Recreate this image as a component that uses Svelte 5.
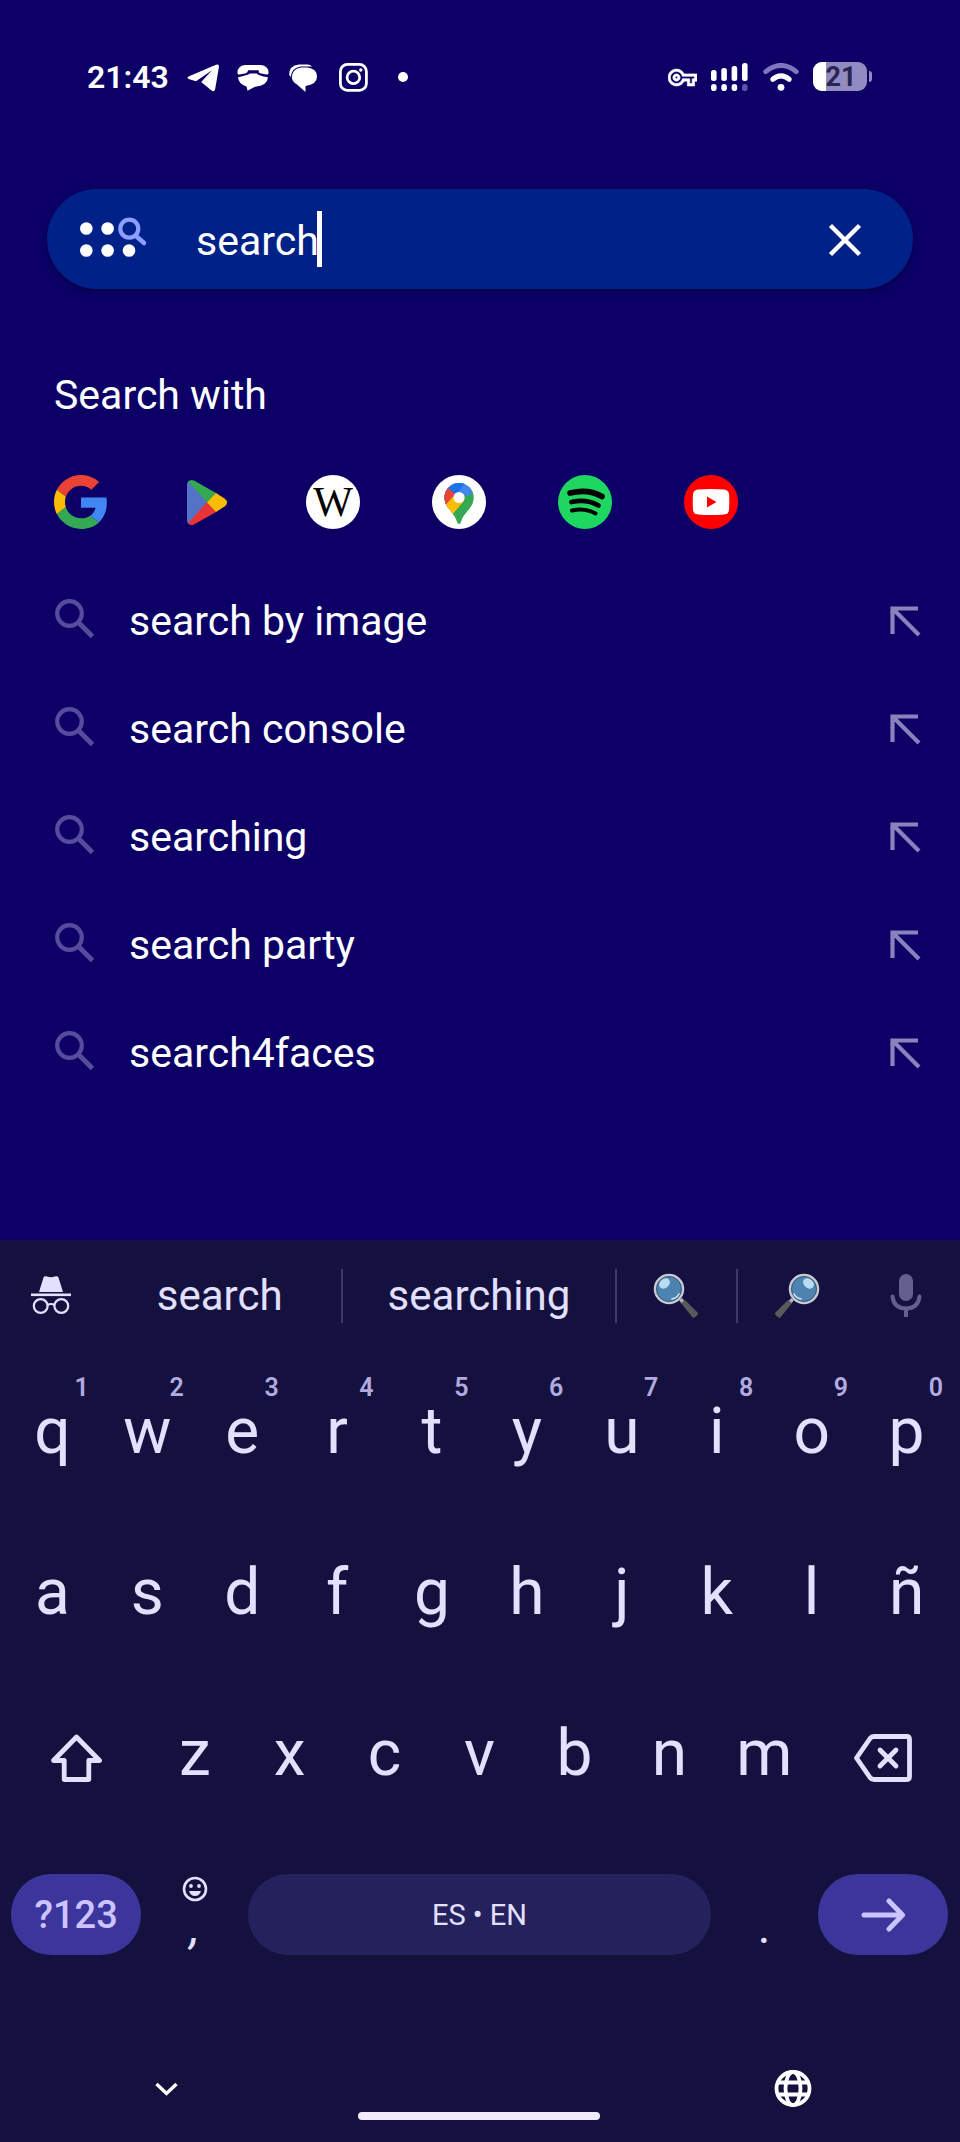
<script>
  let query = $state("search");

  const suggestions = [
    "search by image",
    "search console",
    "searching",
    "search party",
    "search4faces",
  ];

  const topRow = ["q", "w", "e", "r", "t", "y", "u", "i", "o", "p"];
  const middleRow = ["a", "s", "d", "f", "g", "h", "j", "k", "l", "ñ"];
  const bottomRow = ["z", "x", "c", "v", "b", "n", "m"];

  const type = (key) => {
    query += key;
  };

  const backspace = () => {
    query = query.slice(0, -1);
  };
</script>

{#snippet lens()}
  <circle cx="16" cy="16" r="14" fill="#4c83b0" stroke="#c9c9d4" stroke-width="2.5" />
  <circle cx="16" cy="16" r="12.5" fill="none" stroke="#3f5a74" stroke-width="1" />
  <ellipse cx="11.5" cy="10.5" rx="6" ry="4.5" fill="#b9dcf2" transform="rotate(-40 11.5 10.5)" />
  <path d="M19 26Q24 25 26 21" fill="none" stroke="#d5efff" stroke-width="1.6" stroke-linecap="round" />
  <path d="M26 27l3-2 3 4-3 2z" fill="#b5b5b8" />
  <path d="M28 30l4-3 13 13q0 3-5 5z" fill="#59595a" />
{/snippet}

<div class="phone">
  <header class="status">
    <div class="notifications">
      <span class="clock">21:43</span>
      <svg width="32" height="32" viewBox="0 0 32 32" fill="#fff">
        <path d="M1.5 15.5Q-.5 16.8 1.5 18L9 20.3 25 9.3 14.2 21 24.5 29.5Q27.5 31.5 28.2 28L32 5.5Q32 2.5 29 3.8Z" />
      </svg>
      <svg width="32" height="32" viewBox="0 0 32 32" fill="#fff">
        <path d="M.5 12.5Q0 5 8 4H24Q32 5 31.5 12.5Q31 13.8 29.5 13.4L23 12.3Q21.5 11.8 21.7 9.2H11Q10.8 12 9 12.3L2.5 13.6Q1 13.8.5 12.5Z" />
        <path d="M1 16.2Q5 15.8 10.5 13.8 12 13.4 12.8 12.4H20Q20.6 13.5 22 14.1 26 15.8 31 16.2 30.5 24.5 18 25.8L10.5 29.8 9.5 25.5Q1.5 23 1 16.2Z" />
      </svg>
      <svg width="32" height="32" viewBox="0 0 32 32" fill="#fff">
        <path d="M2.2 14Q2 4.5 12 3.5H21Q24 4 25 5.5H13.5Q4.5 7 3.8 16Z" />
        <path d="M14 6.5H20Q30 7.5 30 15.5 30 23.5 18.5 25V31L10 23.5Q5 21 4.8 16 5.5 7.5 14 6.5Z" />
      </svg>
      <svg width="32" height="32" viewBox="0 0 32 32" fill="none" stroke="#fff" stroke-width="2.8">
        <rect x="3.4" y="3.4" width="26" height="26" rx="7" />
        <circle cx="16.4" cy="16.4" r="6.3" />
        <circle cx="23.8" cy="9" r="1.7" fill="#fff" stroke="none" />
      </svg>
      <svg width="32" height="32" viewBox="0 0 32 32"><circle cx="16" cy="16" r="5" fill="#fff" /></svg>
    </div>
    <div class="system">
      <svg width="29" height="29" viewBox="0 0 24 24" fill="#fff" stroke="#fff" stroke-width=".5">
        <path d="M22 19h-6v-4h-2.68c-1.14 2.42-3.6 4-6.32 4-3.86 0-7-3.14-7-7s3.14-7 7-7c2.72 0 5.17 1.58 6.32 4H24v6h-2v4zm-4-2h2v-4h2v-2H11.94l-.23-.67C11.01 8.34 9.11 7 7 7c-2.76 0-5 2.24-5 5s2.24 5 5 5c2.11 0 4.01-1.34 4.71-3.33l.23-.67H18v4zM7 15c-1.65 0-3-1.35-3-3s1.35-3 3-3 3 1.35 3 3-1.35 3-3 3zm0-4c-.55 0-1 .45-1 1s.45 1 1 1 1-.45 1-1-.45-1-1-1z" />
      </svg>
      <svg width="38" height="28" viewBox="0 0 38 28" fill="#fff">
        <rect x="0" y="7" width="5.6" height="11" rx="2.5" />
        <rect x="10.3" y="5" width="5.6" height="13" rx="2.5" />
        <rect x="20.6" y="3" width="5.6" height="15" rx="2.5" />
        <rect x="31" y="0" width="5.6" height="18" rx="2.5" />
        <rect x="0" y="21" width="5.6" height="7" rx="2.8" />
        <rect x="10.3" y="21" width="5.6" height="7" rx="2.8" />
        <rect x="20.6" y="21" width="5.6" height="7" rx="2.8" />
        <rect x="31" y="21" width="5.6" height="7" rx="2.8" fill="#5d52ad" />
      </svg>
      <svg width="36" height="28" viewBox="0 0 36 28" fill="none" stroke-width="5" stroke-linecap="round">
        <path d="M2.8 8.6Q18-3.6 33.2 8.6" stroke="#7f76c0" />
        <path d="M9.8 16.3Q18 9.6 26.2 16.3" stroke="#fff" />
        <circle cx="18" cy="24.3" r="3.4" fill="#fff" />
      </svg>
      <svg width="60" height="30" viewBox="0 0 60 30">
        <clipPath id="cell"><rect width="54" height="29" rx="9" /></clipPath>
        <rect width="54" height="29" rx="9" fill="#928bc2" />
        <rect width="13" height="29" fill="#fff" clip-path="url(#cell)" />
        <path d="M56 9q3 0 3 3v5q0 3-3 3z" fill="#928bc2" />
        <text x="28" y="24" text-anchor="middle" class="percent">21</text>
      </svg>
    </div>
  </header>

  <main>
    <form class="searchbar" onsubmit={(e) => e.preventDefault()}>
      <svg width="68" height="48" viewBox="0 0 68 48" fill="#fff">
        <circle cx="6.3" cy="13.5" r="6.3" />
        <circle cx="27.6" cy="13.5" r="6.3" />
        <circle cx="6.3" cy="35.5" r="6.3" />
        <circle cx="27.6" cy="35.5" r="6.3" />
        <circle cx="49" cy="35.5" r="6.3" />
        <path d="M56 21L64 28" stroke="#8c9eff" stroke-width="4.5" stroke-linecap="round" />
        <circle cx="49.3" cy="13.7" r="9" fill="#002288" stroke="#8c9eff" stroke-width="4.2" />
      </svg>
      <label class="field">
        <input type="text" aria-label="Search" bind:value={query} />
        <span class="caret"></span>
      </label>
      <button type="button" aria-label="Clear" onclick={() => (query = "")}>
        <svg width="48" height="48" viewBox="0 0 48 48" stroke="#fff" stroke-width="4.4">
          <path d="M9.5 10.5L38.5 39.5M38.5 10.5L9.5 39.5" />
        </svg>
      </button>
    </form>

    <h2>Search with</h2>

    <nav class="providers">
      <a href="#google" aria-label="Google">
        <svg width="54" height="54" viewBox="0 0 48 48">
          <path fill="#ea4335" d="M24 9.5c3.54 0 6.71 1.22 9.21 3.6l6.85-6.85C35.9 2.38 30.47 0 24 0 14.62 0 6.51 5.38 2.56 13.22l7.98 6.19C12.43 13.72 17.74 9.5 24 9.5z" />
          <path fill="#4285f4" d="M46.98 24.55c0-1.57-.15-3.09-.38-4.55H24v9.02h12.94c-.58 2.96-2.26 5.48-4.78 7.18l7.73 6c4.51-4.18 7.09-10.36 7.09-17.65z" />
          <path fill="#fbbc05" d="M10.53 28.59c-.48-1.45-.76-2.99-.76-4.59s.27-3.14.76-4.59l-7.98-6.19C.92 16.46 0 20.12 0 24c0 3.88.92 7.54 2.56 10.78l7.97-6.19z" />
          <path fill="#34a853" d="M24 48c6.48 0 11.93-2.13 15.89-5.81l-7.73-6c-2.15 1.45-4.92 2.3-8.16 2.3-6.26 0-11.57-4.22-13.47-9.91l-7.98 6.19C6.51 42.62 14.62 48 24 48z" />
        </svg>
      </a>
      <a href="#play" aria-label="Play Store">
        <svg width="54" height="54" viewBox="0 0 54 54">
          <path fill="#5472c8" d="M9 6L28 27.5 9 49Q7 48 7 46V9Q7 7 9 6Z" />
          <path fill="#34a853" d="M8 6.5Q10.5 4 14 5.6L36.5 18.2 27.5 28Z" />
          <path fill="#ea3335" d="M8 48.5Q10.5 51 14 49.4L36.5 36.8 27 27Z" />
          <path fill="#fbbc04" d="M36 18L44.5 23.5Q49.5 27.5 44.5 31.5L36 37 27 27.5Z" />
        </svg>
      </a>
      <a href="#wikipedia" aria-label="Wikipedia">
        <svg width="54" height="54" viewBox="0 0 54 54">
          <circle cx="27" cy="27" r="27" fill="#fff" />
          <text x="27" y="41" text-anchor="middle" class="wiki">W</text>
        </svg>
      </a>
      <a href="#maps" aria-label="Maps">
        <svg width="54" height="54" viewBox="0 0 54 54">
          <clipPath id="pin">
            <path d="M27 49Q25.5 49 25 46.5C22.5 37 12.5 33.5 12.5 22.5A14.5 14.5 0 0 1 41.5 22.5C41.5 33.5 31.5 37 29 46.5Q28.5 49 27 49Z" />
          </clipPath>
          <circle cx="27" cy="27" r="27" fill="#fff" />
          <g clip-path="url(#pin)">
            <rect width="54" height="54" fill="#34a853" />
            <path d="M0 42L27 22.5 38 9V0H0Z" fill="#4285f4" />
            <path d="M0 0H34L33 8 27 16 14 30 8 12Z" fill="#1a73e8" />
            <path d="M8 10L16 13 27 22.5 14 34Z" fill="#ea4335" />
            <path d="M10 34L21 21.5 32 26 17.5 43Z" fill="#fbbc04" />
            <path d="M38 9L32 18 32 27 17 44 45 50V12Z" fill="#34a853" />
            <path d="M38 9L30 19 36 21 44 14Z" fill="#4285f4" />
          </g>
          <circle cx="27" cy="22.5" r="5.6" fill="#fff" />
        </svg>
      </a>
      <a href="#spotify" aria-label="Spotify">
        <svg width="54" height="54" viewBox="0 0 54 54" fill="none" stroke="#000" stroke-linecap="round">
          <circle cx="27" cy="27" r="27" fill="#1ed760" stroke="none" />
          <path d="M12 18Q30 13.5 44 21.5" stroke-width="5.6" />
          <path d="M13.5 27Q28.5 23.5 40.5 30.5" stroke-width="4.8" />
          <path d="M14 35.5Q27 32.5 37.5 38.5" stroke-width="4" />
        </svg>
      </a>
      <a href="#youtube" aria-label="YouTube">
        <svg width="54" height="54" viewBox="0 0 54 54">
          <circle cx="27" cy="27" r="27" fill="#f00" />
          <path d="M14 14.5Q27 13.5 40 14.5 44.5 15 45 19 45.5 27 45 35 44.5 39 40 39.5 27 40.5 14 39.5 9.5 39 9 35 8.5 27 9 19 9.5 15 14 14.5Z" fill="#fff" />
          <path d="M23 21.5L32.5 27 23 32.5Z" fill="#f00" />
        </svg>
      </a>
    </nav>

    <ul>
      {#each suggestions as suggestion}
        <li>
          <a class="suggestion" href="#results">
            <svg width="40" height="44" viewBox="0 0 40 44" fill="none" stroke="#554c9e" stroke-width="4.2">
              <circle cx="14.5" cy="14.5" r="12.3" />
              <path d="M23.5 23.5L37.5 37.5" stroke-width="5" />
            </svg>
            {suggestion}
          </a>
          <button aria-label="Use {suggestion}" onclick={() => (query = suggestion)}>
            <svg width="48" height="48" viewBox="0 0 48 48" fill="none" stroke="#8983bd" stroke-width="4.2">
              <path d="M37 11.5H11.5V37M12 12L38 38" />
            </svg>
          </button>
        </li>
      {/each}
    </ul>
  </main>

  <section class="keyboard">
    <div class="strip">
      <button aria-label="Incognito">
        <svg width="40" height="40" viewBox="0 0 40 40" fill="#e3e0ff">
          <path d="M8 16L12.5 1.5Q13.5-.5 16 .5 20 2 24 .5 26.5-.5 27.5 1.5L32 16Z" />
          <rect y="17.5" width="40" height="2.6" />
          <g fill="none" stroke="#e3e0ff" stroke-width="2.2">
            <circle cx="9.7" cy="30" r="6.9" />
            <circle cx="30.3" cy="30" r="6.9" />
            <path d="M16.5 29Q20 27 23.5 29" />
          </g>
        </svg>
      </button>
      <button>search</button>
      <button class="divided">searching</button>
      <button class="divided" aria-label="Magnifying glass tilted left">
        <svg width="46" height="46" viewBox="0 0 46 46">{@render lens()}</svg>
      </button>
      <button class="divided" aria-label="Magnifying glass tilted right">
        <svg width="46" height="46" viewBox="0 0 46 46">
          <g transform="matrix(-1 0 0 1 46 0)">{@render lens()}</g>
        </svg>
      </button>
      <button aria-label="Voice input">
        <svg width="32" height="44" viewBox="0 0 32 44" fill="none" stroke="#655f8e" stroke-width="4">
          <rect x="9" y="0" width="14" height="27" rx="7" fill="#655f8e" stroke="none" />
          <path d="M2.5 22.5Q4 34.5 16 34.5T29.5 22.5" stroke-linecap="round" />
          <path d="M16 35V43" />
        </svg>
      </button>
    </div>

    <div class="row ten">
      {#each topRow as key, i}
        <button class="key" onclick={() => type(key)}>
          {key}<span class="hint">{(i + 1) % 10}</span>
        </button>
      {/each}
    </div>

    <div class="row ten">
      {#each middleRow as key}
        <button class="key" onclick={() => type(key)}>{key}</button>
      {/each}
    </div>

    <div class="row nine">
      <button class="key icon" aria-label="Shift">
        <svg width="51" height="48" viewBox="0 0 51 48" fill="none" stroke="#e3e0ff" stroke-width="4.8" stroke-linejoin="round">
          <path d="M25.5 3L48.5 26.5H37.8V45.5H13.2V26.5H2.5Z" />
        </svg>
      </button>
      {#each bottomRow as key}
        <button class="key" onclick={() => type(key)}>{key}</button>
      {/each}
      <button class="key icon" aria-label="Backspace" onclick={backspace}>
        <svg width="58" height="48" viewBox="0 0 58 48" fill="none" stroke="#e3e0ff" stroke-width="4.8" stroke-linejoin="round" stroke-linecap="round">
          <path d="M2.5 24L16 4.5Q17.5 2.5 20 2.5H52.5Q55.5 2.5 55.5 5.5V42.5Q55.5 45.5 52.5 45.5H20Q17.5 45.5 16 43.5Z" />
          <path d="M26 16L42 32M42 16L26 32" />
        </svg>
      </button>
    </div>

    <div class="row last">
      <button class="pill accent">?123</button>
      <button class="key mark" onclick={() => type(",")}>
        <svg width="26" height="26" viewBox="0 0 26 26" fill="#e3e0ff">
          <circle cx="13" cy="13" r="11" fill="none" stroke="#e3e0ff" stroke-width="2.6" />
          <circle cx="9" cy="10" r="1.9" />
          <circle cx="17" cy="10" r="1.9" />
          <path d="M7 15H19Q17.5 20 13 20T7 15Z" />
        </svg>
        <span class="comma">,</span>
      </button>
      <button class="pill space" onclick={() => type(" ")}>ES • EN</button>
      <button class="key mark dot" onclick={() => type(".")}><span>.</span></button>
      <button class="pill accent" aria-label="Go">
        <svg width="44" height="34" viewBox="0 0 44 34" fill="none" stroke="#cbc4ff" stroke-width="5" stroke-linecap="round" stroke-linejoin="round">
          <path d="M3 17H40M28 3L41.500 17 28 31" />
        </svg>
      </button>
    </div>

    <footer>
      <button aria-label="Hide keyboard">
        <svg width="36" height="36" viewBox="0 0 36 36" fill="none" stroke="#fff" stroke-width="3.4">
          <path d="M7.5 13L17.5 22.5 27.5 13" />
        </svg>
      </button>
      <div class="home"></div>
      <button aria-label="Change language">
        <svg width="40" height="40" viewBox="0 0 40 40" fill="none" stroke="#fff" stroke-width="3.8">
          <circle cx="20" cy="19.5" r="16.5" />
          <ellipse cx="20" cy="19.5" rx="7.5" ry="16.5" />
          <path d="M5 13.5H35M5 25.5H35" />
        </svg>
      </button>
    </footer>
  </section>
</div>

<style>
  :global(body) {
    margin: 0;
    background: #0c0067;
  }

  .phone {
    display: flex;
    flex-direction: column;
    min-height: 100vh;
    font-family: Roboto, "Liberation Sans", sans-serif;
    font-size: 41px;
    color: #fff;
  }

  svg {
    display: block;
    flex-shrink: 0;
  }

  button {
    display: flex;
    align-items: center;
    justify-content: center;
    padding: 0;
    border: 0;
    background: none;
    color: inherit;
    font: inherit;
  }

  .status {
    display: flex;
    justify-content: space-between;
    height: 154px;
    padding: 0 87px;
  }

  .notifications,
  .system {
    display: flex;
    align-items: center;
    gap: 18px;
  }

  .system {
    gap: 14px;
  }

  .clock {
    font-size: 32px;
    font-weight: 600;
  }

  .percent {
    font-size: 27px;
    font-weight: 700;
    fill: #2a2450;
  }

  main {
    flex: 1;
    padding: 35px 0 132px;
  }

  .searchbar {
    display: flex;
    align-items: center;
    height: 100px;
    margin: 0 47px;
    padding: 0 44px 0 33px;
    box-sizing: border-box;
    border-radius: 50px;
    background: #002288;
    box-shadow: 0 3px 6px #08004c;
  }

  .field {
    display: flex;
    flex: 1;
    align-items: center;
    margin-left: 48px;
  }

  input {
    field-sizing: content;
    padding: 3px 0 0;
    border: 0;
    outline: 0;
    background: none;
    color: inherit;
    font: inherit;
    caret-color: transparent;
  }

  .caret {
    width: 5px;
    height: 56px;
    margin-left: -2px;
    background: #fff;
  }

  h2 {
    margin: 82px 54px 0;
    font-size: 41px;
    line-height: 48px;
    font-weight: 400;
  }

  .providers {
    display: flex;
    gap: 72px;
    margin: 56px 54px 38px;
  }

  .wiki {
    font-family: "Liberation Serif", serif;
    font-size: 42px;
  }

  ul {
    margin: 0;
    padding: 0 31px 0 55px;
    list-style: none;
  }

  li {
    display: flex;
    align-items: center;
    height: 108px;
  }

  .suggestion {
    display: flex;
    flex: 1;
    align-items: center;
    gap: 34px;
    color: inherit;
    text-decoration: none;
  }

  .keyboard {
    background: #14113f;
    color: #e3e0ff;
  }

  .strip {
    display: grid;
    grid-template-columns: 94fr 243fr 273fr 121fr 121fr 98fr;
    align-items: center;
    height: 111px;
    padding: 0 5px 0 4px;
    font-size: 42px;
  }

  .strip button {
    height: 54px;
  }

  .strip .divided {
    border-left: 2px solid #3f3b69;
  }

  .row {
    display: grid;
    height: 161px;
    padding: 0 6px 0 5px;
  }

  .ten {
    grid-template-columns: repeat(10, 1fr);
  }

  .nine {
    grid-template-columns: 3fr repeat(7, 2fr) 3fr;
  }

  .last {
    grid-template-columns: 3fr 2fr 10fr 2fr 3fr;
  }

  .key {
    position: relative;
    min-width: 0;
    font-size: 64px;
  }

  .icon {
    padding-top: 8px;
  }

  .hint {
    position: absolute;
    top: 22px;
    right: 11px;
    font-size: 25px;
    line-height: 30px;
    font-weight: 600;
    color: #b3abe0;
  }

  .pill {
    margin: 40px 6px;
    border-radius: 40px;
  }

  .accent {
    background: #3c359c;
    color: #cbc4ff;
    font-size: 38px;
    font-weight: 500;
  }

  .space {
    background: #24215c;
    font-size: 29px;
  }

  .mark {
    flex-direction: column;
    justify-content: flex-start;
    padding-top: 42px;
    font-size: 48px;
    line-height: 50px;
  }

  .comma {
    font-style: italic;
  }

  .dot {
    padding-top: 68px;
  }

  footer {
    display: flex;
    align-items: center;
    justify-content: space-between;
    height: 147px;
    padding: 40px 147px 0 149px;
    box-sizing: border-box;
  }

  .home {
    width: 242px;
    height: 8px;
    margin-top: 54px;
    border-radius: 4px;
    background: #f0ecfa;
  }
</style>
